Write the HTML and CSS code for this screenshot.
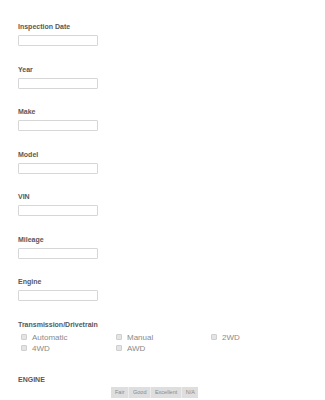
FILE: index.html
```html
<!DOCTYPE html>
<html>

<head>
  <meta charset="UTF-8">
  <title>Vehicle Inspection</title>
  <link rel="stylesheet" href="styles.css">
</head>

<body>
  <div class="form">
    <div class="field">
      <label>Inspection Date</label>
      <input type="text">
    </div>
    <div class="field">
      <label>Year</label>
      <input type="text">
    </div>
    <div class="field">
      <label>Make</label>
      <input type="text">
    </div>
    <div class="field">
      <label>Model</label>
      <input type="text">
    </div>
    <div class="field">
      <label>VIN</label>
      <input type="text">
    </div>
    <div class="field">
      <label>Mileage</label>
      <input type="text">
    </div>
    <div class="field">
      <label>Engine</label>
      <input type="text">
    </div>
    <div class="field">
      <label>Transmission/Drivetrain</label>
      <div class="checks">
        <span class="check"><i></i>Automatic</span>
        <span class="check"><i></i>Manual</span>
        <span class="check"><i></i>2WD</span>
        <span class="check"><i></i>4WD</span>
        <span class="check"><i></i>AWD</span>
      </div>
    </div>
    <div class="section">
      <div class="section-title">ENGINE</div>
      <div class="rating">
        <span>Fair</span>
        <span>Good</span>
        <span>Excellent</span>
        <span>N/A</span>
      </div>
    </div>
  </div>
</body>

</html>
```

FILE: styles.css
```css
body {
  margin: 0;
  font-family: "Liberation Sans", Arial, sans-serif;
  background: #fff;
}

.form {
  padding: 22px 0 0 18px;
  display: grid;
  grid-row-gap: 18.5px;
}

.field {
  display: grid;
  grid-row-gap: 3px;
  justify-items: start;
}

label,
.section-title {
  font-size: 7px;
  line-height: 10px;
  font-weight: bold;
  color: #585858;
}

input[type="text"] {
  box-sizing: border-box;
  width: 80px;
  height: 11px;
  margin: 0;
  padding: 0;
  border: 1px solid #d6d6d6;
  border-radius: 1px;
  background: #fff;
  outline: none;
}

.checks {
  display: grid;
  grid-template-columns: 95px 95px 95px;
  grid-auto-rows: 11px;
  margin-top: -1px;
}

.check {
  display: flex;
  align-items: center;
  font-size: 8px;
  color: #8a8a8a;
  padding-left: 3px;
}

.check i {
  box-sizing: border-box;
  width: 6px;
  height: 6px;
  border: 1px solid #cfcfcf;
  background: #e4e4e4;
  border-radius: 1px;
  margin-right: 5px;
}

.section {
  margin-top: 2.5px;
  display: grid;
  grid-row-gap: 2px;
  justify-items: start;
}

.rating {
  margin-left: 93px;
  display: flex;
  background: #dedede;
  height: 11px;
  align-items: stretch;
}

.rating span {
  display: flex;
  align-items: center;
  font-size: 5.5px;
  color: #8a8a8a;
  padding: 0 3.5px 0 4px;
  border-left: 1px solid #ececec;
}

.rating span:first-child {
  border-left: none;
}
```
